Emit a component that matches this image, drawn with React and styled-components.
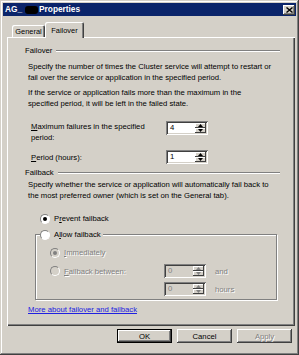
import styled, { createGlobalStyle } from "styled-components";

const GlobalStyle = createGlobalStyle`
	html, body {
		margin: 0;
		padding: 0;
		background: #d4d0c8;
	}
	body {
		font-family: "Liberation Sans", Arial, sans-serif;
		font-size: 7.7px;
		line-height: 11px;
		color: #000;
	}
`;

const Radio = ({ checked, disabled, children }) => (
	<RadioRow disabled={disabled}>
		<RadioCircle disabled={disabled}>{checked && <RadioDot disabled={disabled} />}</RadioCircle>
		<span>{children}</span>
	</RadioRow>
);

const Arrow = ({ up, disabled }) => (
	<svg width="5" height="3" viewBox="0 0 5 3">
		<path d={up ? "M2.5 0 L5 3 L0 3 Z" : "M0 0 L5 0 L2.5 3 Z"} fill={disabled ? "#808080" : "#000"} />
	</svg>
);

const SpinBox = ({ value, disabled }) => (
	<Spin disabled={disabled}>
		<SpinValue disabled={disabled}>{value}</SpinValue>
		<SpinButtons>
			<SpinBtn>
				<Arrow up disabled={disabled} />
			</SpinBtn>
			<SpinBtn>
				<Arrow disabled={disabled} />
			</SpinBtn>
		</SpinButtons>
	</Spin>
);

export default function App() {
	return (
		<>
			<GlobalStyle />
			<Window>
				<TitleBar>
					<TitleText>
						AG_<Redacted />Properties
					</TitleText>
					<CloseButton>
						<svg width="7" height="6" viewBox="0 0 7 6">
							<path d="M0.5 0.5 L6.5 5.5 M6.5 0.5 L0.5 5.5" stroke="#000" strokeWidth="1.4" />
						</svg>
					</CloseButton>
				</TitleBar>
				<Body>
					<TabRow>
						<Tab w={33}>General</Tab>
						<Tab w={39} active>
							Failover
						</Tab>
					</TabRow>
					<Panel>
						<SectionHeader>
							<span>Failover</span>
							<Etched />
						</SectionHeader>
						<SectionBody>
							<Para top={5}>
								Specify the number of times the Cluster service will attempt to restart or
								<br />
								fail over the service or application in the specified period.
							</Para>
							<Para top={4}>
								If the service or application fails more than the maximum in the
								<br />
								specified period, it will be left in the failed state.
							</Para>
							<FieldRow top={12}>
								<FieldLabel>
									<u>M</u>aximum failures in the specified
									<br />
									period:
								</FieldLabel>
								<SpinBox value="4" />
							</FieldRow>
							<FieldRow top={7} center>
								<FieldLabel>
									<u>P</u>eriod (hours):
								</FieldLabel>
								<SpinBox value="1" />
							</FieldRow>
						</SectionBody>
						<SectionHeader top={3}>
							<span>Failback</span>
							<Etched />
						</SectionHeader>
						<SectionBody>
							<Para top={1}>
								Specify whether the service or application will automatically fail back to
								<br />
								the most preferred owner (which is set on the General tab).
							</Para>
							<RadioWrap top={12}>
								<Radio checked>
									P<u>r</u>event failback
								</Radio>
							</RadioWrap>
							<Group>
								<GroupLegend>
									<Radio>
										A<u>l</u>low failback
									</Radio>
								</GroupLegend>
								<GroupRadio>
									<Radio checked disabled>
										<u>I</u>mmediately
									</Radio>
								</GroupRadio>
								<BetweenRow>
									<BetweenLabel>
										<Radio disabled>
											<u>F</u>ailback between:
										</Radio>
									</BetweenLabel>
									<SpinBox value="0" disabled />
									<Muted>and</Muted>
								</BetweenRow>
								<BetweenRow top={4}>
									<BetweenLabel />
									<SpinBox value="0" disabled />
									<Muted>hours</Muted>
								</BetweenRow>
							</Group>
							<Link href="#">More about failover and failback</Link>
						</SectionBody>
					</Panel>
					<ButtonRow>
						<Button isDefault>OK</Button>
						<Button>Cancel</Button>
						<Button disabled>Apply</Button>
					</ButtonRow>
				</Body>
			</Window>
		</>
	);
}

const Window = styled.div`
	width: 299px;
	height: 355px;
	box-sizing: border-box;
	padding: 3px;
	background: #d4d0c8;
	box-shadow: inset -1px -1px #404040, inset 1px 1px #d4d0c8, inset -2px -2px #808080, inset 2px 2px #fff;
	display: flex;
	flex-direction: column;
`;

const TitleBar = styled.div`
	height: 13px;
	background: #0a246a;
	display: flex;
	align-items: center;
	justify-content: space-between;
	padding: 0 1px 0 2px;
`;

const TitleText = styled.div`
	color: #fff;
	font-weight: bold;
	font-size: 8.3px;
	display: flex;
	align-items: center;
	white-space: nowrap;
`;

const Redacted = styled.span`
	display: inline-block;
	width: 13px;
	height: 8px;
	margin: 0 1px 0 3px;
	background: #000;
	border-radius: 3px;
`;

const CloseButton = styled.div`
	width: 12px;
	height: 10px;
	box-sizing: border-box;
	background: #d4d0c8;
	box-shadow: inset -1px -1px #404040, inset 1px 1px #fff, inset -2px -2px #808080;
	display: flex;
	align-items: center;
	justify-content: center;
`;

const Body = styled.div`
	flex: 1;
	display: flex;
	flex-direction: column;
	padding: 6px 1px 0 4px;
`;

const TabRow = styled.div`
	display: flex;
	align-items: flex-end;
	height: 15px;
	padding-left: 5px;
`;

const Tab = styled.div`
	position: relative;
	z-index: ${(p) => (p.active ? 1 : 0)};
	flex: 0 0 ${(p) => p.w}px;
	height: ${(p) => (p.active ? 16 : 12)}px;
	margin-bottom: ${(p) => (p.active ? -1 : 0)}px;
	box-sizing: border-box;
	padding-top: ${(p) => (p.active ? 0 : 1)}px;
	background: #d4d0c8;
	border-radius: 2px 2px 0 0;
	box-shadow: inset 1px 1px #fff, inset -1px 0 #404040, inset -2px 0 #808080;
	display: flex;
	align-items: center;
	justify-content: center;
	white-space: nowrap;
	font-size: 7.4px;
`;

const Panel = styled.div`
	height: 289px;
	box-sizing: border-box;
	padding: 8px 15px 0 18px;
	box-shadow: inset 1px 1px #fff, inset -1px -1px #404040, inset -2px -2px #808080;
`;

const SectionHeader = styled.div`
	display: flex;
	align-items: center;
	gap: 4px;
	margin-top: ${(p) => p.top || 0}px;
	white-space: nowrap;
`;

const Etched = styled.div`
	flex: 1;
	height: 1px;
	background: #808080;
	box-shadow: 0 1px #fff;
`;

const SectionBody = styled.div`
	padding-left: 3px;
`;

const Para = styled.p`
	margin: ${(p) => p.top}px 0 0;
	white-space: nowrap;
`;

const FieldRow = styled.div`
	display: flex;
	align-items: ${(p) => (p.center ? "center" : "flex-start")};
	margin-top: ${(p) => p.top}px;
	padding-left: 3px;
`;

const FieldLabel = styled.div`
	width: 135px;
	white-space: nowrap;
`;

const Spin = styled.div`
	display: flex;
	width: 42px;
	height: 14px;
	box-sizing: border-box;
	padding: 2px;
	background: ${(p) => (p.disabled ? "#d4d0c8" : "#fff")};
	box-shadow: inset 1px 1px #808080, inset -1px -1px #fff, inset 2px 2px #404040, inset -2px -2px #d4d0c8;
`;

const SpinValue = styled.div`
	flex: 1;
	padding-left: 2px;
	line-height: 10px;
	color: ${(p) => (p.disabled ? "#808080" : "#000")};
`;

const SpinButtons = styled.div`
	width: 11px;
	display: flex;
	flex-direction: column;
`;

const SpinBtn = styled.div`
	flex: 1;
	background: #d4d0c8;
	box-shadow: inset -1px -1px #404040, inset 1px 1px #fff;
	display: flex;
	align-items: center;
	justify-content: center;
`;

const RadioRow = styled.div`
	display: flex;
	align-items: center;
	gap: 4px;
	white-space: nowrap;
	color: ${(p) => (p.disabled ? "#808080" : "#000")};
	text-shadow: ${(p) => (p.disabled ? "1px 1px #fff" : "none")};
`;

const RadioCircle = styled.span`
	width: 10px;
	height: 10px;
	box-sizing: border-box;
	border-radius: 50%;
	border: 1px solid;
	border-color: #808080 #fff #fff #808080;
	background: ${(p) => (p.disabled ? "#d4d0c8" : "#fff")};
	display: flex;
	align-items: center;
	justify-content: center;
`;

const RadioDot = styled.span`
	width: 4px;
	height: 4px;
	border-radius: 50%;
	background: ${(p) => (p.disabled ? "#808080" : "#000")};
`;

const RadioWrap = styled.div`
	margin-top: ${(p) => p.top}px;
	padding-left: 12px;
`;

const Group = styled.fieldset`
	margin: 5px 3px 0 7px;
	padding: 0 0 5px 0;
	height: 71px;
	box-sizing: border-box;
	border: 1px solid #808080;
	box-shadow: inset 1px 1px #fff, 1px 1px #fff;
`;

const GroupLegend = styled.legend`
	margin-left: 4px;
	padding: 0 2px 0 0;
	background: #d4d0c8;
`;

const GroupRadio = styled.div`
	margin-top: 7px;
	padding-left: 14px;
`;

const BetweenRow = styled.div`
	display: flex;
	align-items: center;
	gap: 9px;
	margin-top: ${(p) => p.top || 6}px;
	padding-left: 14px;
`;

const BetweenLabel = styled.div`
	width: 105px;
`;

const Muted = styled.span`
	color: #808080;
	text-shadow: 1px 1px #fff;
`;

const Link = styled.a`
	display: inline-block;
	margin-top: 4px;
	color: #2020e0;
	text-decoration: underline;
	white-space: nowrap;
`;

const ButtonRow = styled.div`
	display: flex;
	justify-content: flex-end;
	gap: 5px;
	margin-top: 3px;
	padding-right: 3px;
`;

const Button = styled.div`
	width: 55px;
	height: 14px;
	box-sizing: border-box;
	display: flex;
	align-items: center;
	justify-content: center;
	background: #d4d0c8;
	color: ${(p) => (p.disabled ? "#808080" : "#000")};
	text-shadow: ${(p) => (p.disabled ? "1px 1px #fff" : "none")};
	box-shadow: ${(p) =>
		p.isDefault
			? "inset 0 0 0 1px #000, inset -2px -2px #404040, inset 2px 2px #fff, inset -3px -3px #808080"
			: "inset -1px -1px #404040, inset 1px 1px #fff, inset -2px -2px #808080"};
`;
